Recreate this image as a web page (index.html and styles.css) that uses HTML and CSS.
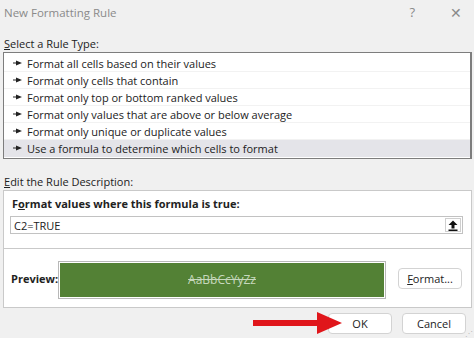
FILE: index.html
```html
<!DOCTYPE html>
<html lang="en">
<head>
    <meta charset="UTF-8">
    <meta name="viewport" content="width=device-width, initial-scale=1.0">
    <title>New Formatting Rule</title>
    <link rel="stylesheet" href="styles.css">
</head>
<body>
    <div class="dialog">
        <div class="titlebar">
            <span class="title">New Formatting Rule</span>
            <span class="title-btn help">?</span>
            <span class="title-btn close">&#x2715;</span>
        </div>

        <div class="label"><u>S</u>elect a Rule Type:</div>
        <div class="rule-list">
            <div class="rule"><svg class="pointer" width="9" height="6" viewBox="0 0 9 6"><path d="M0 2.5h4v1H0zM3 0.5L9 3L3 5.5z" fill="#222"/></svg>Format all cells based on their values</div>
            <div class="rule"><svg class="pointer" width="9" height="6" viewBox="0 0 9 6"><path d="M0 2.5h4v1H0zM3 0.5L9 3L3 5.5z" fill="#222"/></svg>Format only cells that contain</div>
            <div class="rule"><svg class="pointer" width="9" height="6" viewBox="0 0 9 6"><path d="M0 2.5h4v1H0zM3 0.5L9 3L3 5.5z" fill="#222"/></svg>Format only top or bottom ranked values</div>
            <div class="rule"><svg class="pointer" width="9" height="6" viewBox="0 0 9 6"><path d="M0 2.5h4v1H0zM3 0.5L9 3L3 5.5z" fill="#222"/></svg>Format only values that are above or below average</div>
            <div class="rule"><svg class="pointer" width="9" height="6" viewBox="0 0 9 6"><path d="M0 2.5h4v1H0zM3 0.5L9 3L3 5.5z" fill="#222"/></svg>Format only unique or duplicate values</div>
            <div class="rule selected"><svg class="pointer" width="9" height="6" viewBox="0 0 9 6"><path d="M0 2.5h4v1H0zM3 0.5L9 3L3 5.5z" fill="#222"/></svg>Use a formula to determine which cells to format</div>
        </div>

        <div class="label label-edit"><u>E</u>dit the Rule Description:</div>
        <div class="desc-box">
            <div class="formula-part">
                <div class="formula-label">F<u>o</u>rmat values where this formula is true:</div>
                <div class="formula-input">
                    <span class="formula-text">C2=TRUE</span>
                    <span class="collapse-btn">
                        <svg width="10" height="11" viewBox="0 0 10 11"><path d="M5 0.5L9.5 5H6.5V8.5H3.5V5H0.5z M0.5 9.5h9v1.5h-9z" fill="#111"/></svg>
                    </span>
                </div>
            </div>
            <div class="preview-part">
                <span class="preview-label">Preview:</span>
                <div class="preview-box"><span class="sample">AaBbCcYyZz</span></div>
                <button class="btn format-btn"><u>F</u>ormat...</button>
            </div>
        </div>

        <div class="footer">
            <button class="btn">OK</button>
            <button class="btn">Cancel</button>
            <svg class="red-arrow" width="90" height="24" viewBox="0 0 90 24"><path d="M0 9H64V1L89 12L64 23V15H0z" fill="#e0161b"/></svg>
        </div>
        <div class="grip">&#x22F0;</div>
    </div>
</body>
</html>
```

FILE: styles.css
```css
html, body {
    margin: 0;
    padding: 0;
}
body {
    font-family: "Open Sans", "Noto Sans", sans-serif;
    font-size: 11px;
    color: #222;
    background-color: #f0f0f0;
}
.dialog {
    width: 474px;
    height: 338px;
    position: relative;
    overflow: hidden;
}
.titlebar {
    display: flex;
    align-items: center;
    height: 24px;
    padding-left: 4px;
}
.title {
    font-size: 11.5px;
    color: #8a8a8a;
    flex: 1;
}
.title-btn {
    color: #8a8a8a;
    font-size: 13px;
}
.help {
    margin-right: 35px;
}
.close {
    margin-right: 12px;
    font-size: 14px;
}
.label {
    margin: 12px 0 0 4px;
    line-height: 16px;
}
.label-edit {
    margin-top: 15px;
}
.rule-list {
    margin: 0 2px 0 3px;
    border: 1px solid #7d7d7d;
    border-right-width: 2px;
    background-color: #fff;
    padding: 2px 0 1px;
}
.rule {
    display: flex;
    align-items: center;
    height: 16px;
    border-bottom: 1px solid #f2f2f2;
    padding-left: 9px;
    white-space: nowrap;
}
.rule:last-child {
    border-bottom-color: transparent;
}
.rule.selected {
    background-color: #e4e4e9;
}
.pointer {
    margin-right: 5px;
}
.desc-box {
    margin: 0 2px 0 3px;
    border: 1px solid #c9c9c9;
    background-color: #fff;
}
.formula-part {
    height: 58px;
    border-bottom: 1px solid #c9c9c9;
    padding: 5px 8px 0 6px;
    box-sizing: border-box;
}
.formula-label {
    font-weight: bold;
    line-height: 16px;
    margin-left: 2px;
}
.formula-input {
    display: flex;
    align-items: center;
    justify-content: space-between;
    height: 16px;
    margin-top: 4px;
    border: 1px solid #c2c2c2;
    padding: 0 1px 0 3px;
}
.collapse-btn {
    display: flex;
    align-items: center;
    justify-content: center;
    width: 16px;
    height: 14px;
    border: 1px solid #cfcfcf;
    box-sizing: border-box;
}
.preview-part {
    display: flex;
    align-items: center;
    height: 58px;
    padding: 0 9px 0 7px;
}
.preview-label {
    font-weight: bold;
    width: 47px;
}
.preview-box {
    width: 328px;
    height: 38px;
    border: 1px solid #b8b8b8;
    padding: 1px;
    box-sizing: border-box;
    background-color: #fff;
    display: flex;
    margin-top: 3px;
}
.sample {
    flex: 1;
    display: flex;
    align-items: center;
    justify-content: center;
    background-color: #538135;
    color: #c6d8bd;
    font-size: 12px;
    text-decoration: line-through;
}
.btn {
    font-family: inherit;
    font-size: 11px;
    color: #222;
    width: 64px;
    height: 21px;
    padding: 0;
    background-color: #fff;
    border: 1px solid #d3d3d3;
    border-radius: 4px;
}
.format-btn {
    margin-left: auto;
}
.footer {
    display: flex;
    justify-content: flex-end;
    gap: 10px;
    padding: 5px 8px 0 0;
    position: relative;
}
.red-arrow {
    position: absolute;
    left: 253px;
    top: 3px;
}
.grip {
    position: absolute;
    right: 1px;
    bottom: 0;
    font-size: 8px;
    color: #bbb;
}
```
